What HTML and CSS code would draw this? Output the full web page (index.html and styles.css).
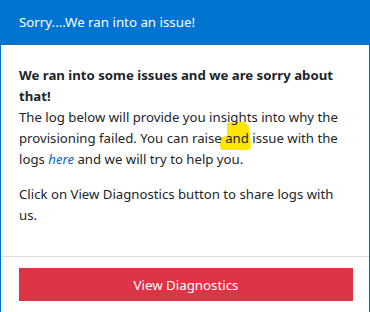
FILE: index.html
```html
<!DOCTYPE html>
<html>
<head>
<meta charset="utf-8">
<link rel="stylesheet" href="styles.css">
</head>
<body>
<div class="card">
  <div class="card-header">Sorry....We ran into an issue!</div>
  <div class="card-body">
    <p class="intro"><strong>We ran into some issues and we are sorry about that!</strong><br>The log below will provide you insights into why the provisioning failed. You can raise <span class="mark">and<svg class="marker" width="32" height="31" viewBox="0 0 32 31"><path d="M7 2 Q15 0 24 1 Q30 4 30 12 L31 26 Q30 30 25 29 L2 29 Q0 28 0 23 L1 16 L7 15 Z" fill="#ffe600"/></svg></span> issue with the logs <a class="link" href="#">here</a> and we will try to help you.</p>
    <p>Click on View Diagnostics button to share logs with us.</p>
  </div>
  <div class="card-footer">
    <button class="btn">View Diagnostics</button>
  </div>
</div>
</body>
</html>
```
FILE: styles.css
```css
html, body {
  margin: 0;
  padding: 0;
  background: #fff;
}
body {
  font-family: "Noto Sans", "Open Sans", sans-serif;
  color: #212529;
}
.card {
  width: 370px;
  height: 312px;
  box-sizing: border-box;
  border-left: 1px solid #0070c8;
  border-right: 1px solid #0070c8;
  display: flex;
  flex-direction: column;
}
.card-header {
  height: 45px;
  box-sizing: border-box;
  margin: 0 -1px;
  background: #0074cf;
  border-bottom: 1px solid #1a6ab0;
  color: #fff;
  font-size: 13.3px;
  display: flex;
  align-items: center;
  padding: 0 19px;
}
.card-body {
  position: relative;
  z-index: 0;
  padding: 20px 18px 30px 18px;
  font-size: 13.2px;
  line-height: 21px;
}
.card-body p {
  margin: 0 0 14px 0;
}
.card-body p:last-child {
  margin-bottom: 0;
}
.card-body strong {
  font-weight: 700;
}
.mark {
  position: relative;
}
.marker {
  position: absolute;
  left: -5px;
  top: -8px;
  z-index: -1;
}
.link {
  color: #0066cc;
  font-style: italic;
  text-decoration: none;
}
.card-footer {
  border-top: 1px solid #dcdcdc;
  padding: 11px 16px 0 18px;
}
.btn {
  display: block;
  width: 100%;
  height: 33px;
  border: 0;
  background: #dc3545;
  color: #fff;
  font-family: "Noto Sans", "Open Sans", sans-serif;
  font-size: 13.3px;
  padding: 0;
}
```
